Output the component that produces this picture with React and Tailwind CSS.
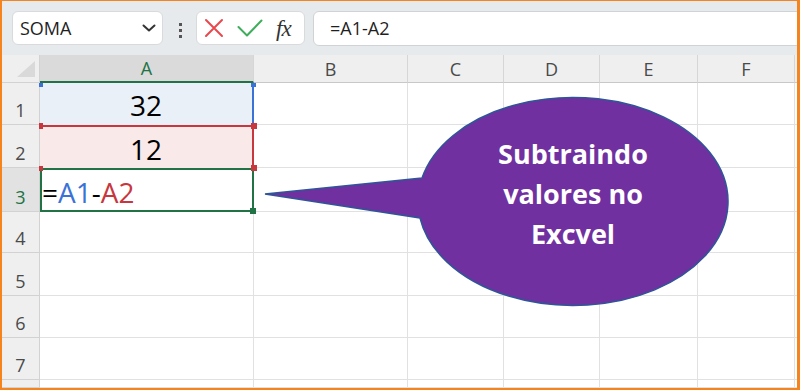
import React from "react";

const cols = [
  { w: "w-[214px]", l: "A" },
  { w: "w-[154px]", l: "B" },
  { w: "w-[96px]", l: "C" },
  { w: "w-[96px]", l: "D" },
  { w: "w-[98px]", l: "E" },
  { w: "w-[97px]", l: "F" },
];

const rowH = ["h-[42px]", "h-[43px]", "h-[44px]", "h-[41px]", "h-[43px]", "h-[42px]", "h-[42px]"];

function Cell({ className = "", children }) {
  return (
    <div className={"shrink-0 border-r border-b border-[#e1e1e1] " + className}>{children}</div>
  );
}

function Row({ n, h, first }) {
  const sel = n === 3;
  return (
    <div className={"flex shrink-0 " + h}>
      <div
        className={
          "w-[38px] shrink-0 flex items-end justify-center pb-[5px] border-r border-b border-[#d2d2d2] text-[18px] leading-none " +
          (sel ? "bg-[#e2e2e2] text-[#217346]" : "bg-[#efefef] text-[#4a4a4a]")
        }
      >
        {n}
      </div>
      {first}
      {cols.slice(1).map((c) => (
        <Cell key={c.l} className={c.w} />
      ))}
      <div className="flex-1 border-b border-[#e1e1e1]" />
    </div>
  );
}

export default function App() {
  return (
    <div
      className="relative w-[800px] h-[390px] overflow-hidden bg-white border-t border-l-2 border-r-[3px] border-b-2 border-[#f5841f] flex flex-col"
      style={{ fontFamily: '"Open Sans", "Noto Sans", sans-serif' }}
    >
      {/* toolbar */}
      <div className="h-[54px] shrink-0 bg-[#e6eaed] flex items-start pt-[10px] pl-[10px]">
        <div className="w-[151px] h-[34px] bg-white rounded-[6px] border border-[#d8dadc] flex items-center pl-[7px] pr-[6px] text-[18px] text-[#1f1f1f]">
          <span className="flex-1">SOMA</span>
          <svg width="14" height="8" viewBox="0 0 14 8">
            <path d="M1.5 1.5 L7 6.5 L12.5 1.5" fill="none" stroke="#333" strokeWidth="2" strokeLinecap="round" strokeLinejoin="round" />
          </svg>
        </div>
        <div className="ml-[16px] mt-[12px] flex flex-col gap-[3px]">
          <div className="w-[3px] h-[3px] bg-[#555]" />
          <div className="w-[3px] h-[3px] bg-[#555]" />
          <div className="w-[3px] h-[3px] bg-[#555]" />
        </div>
        <div className="ml-[14px] w-[109px] h-[34px] bg-white rounded-[6px] border border-[#d8dadc] flex items-center pl-[7px]">
          <svg width="20" height="20" viewBox="0 0 20 20">
            <path d="M2 2 L18 18 M18 2 L2 18" stroke="#e8474c" strokeWidth="2" strokeLinecap="round" />
          </svg>
          <svg width="26" height="18" viewBox="0 0 26 18" className="ml-[13px]">
            <path d="M1.5 8 L10 16.5 L24.5 1.5" fill="none" stroke="#3fae5c" strokeWidth="2" strokeLinecap="round" strokeLinejoin="round" />
          </svg>
          <span
            className="ml-[13px] text-[23px] italic text-[#333] leading-none tracking-[-1px]"
            style={{ fontFamily: '"Liberation Serif", "DejaVu Serif", serif' }}
          >
            fx
          </span>
        </div>
        <div className="ml-[8px] flex-1 mr-[-6px] h-[35px] bg-white rounded-l-[6px] border border-[#d0d3d6] flex items-center pl-[16px] text-[18px] text-[#1f1f1f]">
          =A1-A2
        </div>
      </div>

      {/* column headers */}
      <div className="flex h-[28px] shrink-0 bg-[#efefef]">
        <div className="w-[38px] shrink-0 border-r border-b border-[#d2d2d2] relative">
          <svg width="38" height="28" viewBox="0 0 38 28" className="absolute left-0 top-0">
            <polygon points="33,6 33,22 15,22" fill="#d9d9d9" />
          </svg>
        </div>
        {cols.map((c, i) => (
          <div
            key={c.l}
            className={
              "shrink-0 flex items-center justify-center text-[18px] leading-none border-r border-[#d6d6d6] " +
              c.w +
              (i === 0
                ? " bg-[#dadada] text-[#217346] border-b-2 border-b-[#217346]"
                : " text-[#4a4a4a] border-b border-b-[#c8c8c8]")
            }
          >
            {c.l}
          </div>
        ))}
        <div className="flex-1 border-b border-[#c8c8c8]" />
      </div>

      {/* rows */}
      <Row
        n={1}
        h={rowH[0]}
        first={
          <div className="w-[214px] shrink-0 bg-[#eaf0f8] border-r-2 border-[#3b72d8] flex items-end justify-center pb-[6px] text-[28px] leading-none text-black">
            32
          </div>
        }
      />
      <Row
        n={2}
        h={rowH[1]}
        first={
          <div className="w-[214px] shrink-0 bg-[#f9e9e9] border-t-2 border-r-2 border-[#c8373d] flex items-end justify-center pb-[5px] text-[28px] leading-none text-black">
            12
          </div>
        }
      />
      <Row
        n={3}
        h={rowH[2]}
        first={
          <div className="w-[214px] shrink-0 border-2 border-[#217346] flex items-end pb-[4px] text-[28px] leading-none text-black">
            <span>=</span>
            <span className="text-[#3b72d8]">A1</span>
            <span>-</span>
            <span className="text-[#c8373d]">A2</span>
          </div>
        }
      />
      {[4, 5, 6, 7].map((n, i) => (
        <Row key={n} n={n} h={rowH[3 + i]} first={<Cell className="w-[214px]" />} />
      ))}
      <Row n={""} h="flex-1" first={<Cell className="w-[214px]" />} />

      {/* selection handles */}
      <div className="absolute left-[37px] top-[82px] w-[4px] h-[4px] bg-[#3b72d8]" />
      <div className="absolute left-[249px] top-[82px] w-[5px] h-[4px] bg-[#3b72d8]" />
      <div className="absolute left-[37px] top-[122px] w-[4px] h-[6px] bg-[#c8373d]" />
      <div className="absolute left-[249px] top-[122px] w-[6px] h-[6px] bg-[#c8373d]" />
      <div className="absolute left-[37px] top-[165px] w-[4px] h-[5px] bg-[#c8373d]" />
      <div className="absolute left-[249px] top-[164px] w-[6px] h-[6px] bg-[#c8373d]" />
      <div className="absolute left-[248px] top-[207px] w-[6px] h-[6px] bg-[#217346]" />

      {/* callout */}
      <svg
        width="800"
        height="390"
        viewBox="0 0 800 390"
        className="absolute left-[-2px] top-[-1px] pointer-events-none"
      >
        <path
          d="M265 194 L422 178 A155 104 0 1 1 420 218 Z"
          fill="#7030a0"
          stroke="#2f5597"
          strokeWidth="1.5"
          strokeLinejoin="miter"
        />
      </svg>
      <div className="absolute left-[416px] top-[133px] w-[310px] text-center text-white font-bold text-[27px] leading-[40px]">
        Subtraindo
        <br />
        valores no
        <br />
        Excvel
      </div>
    </div>
  );
}
